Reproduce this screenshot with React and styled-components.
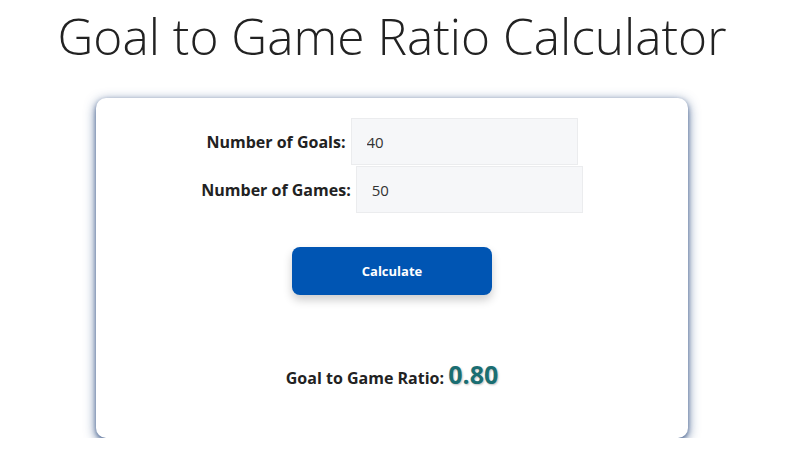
import React, { useState } from "react"
import styled, { createGlobalStyle } from "styled-components"

const GlobalStyle = createGlobalStyle`
    body {
        margin: 8px;
        background: #ffffff;
        font-family: "Open Sans", "Noto Sans", sans-serif;
        color: #212529;
    }
`

const App = () => {
    const [goals, setGoals] = useState("40")
    const [games, setGames] = useState("50")
    const [ratio, setRatio] = useState("0.80")

    const calculate = () => {
        const g = parseFloat(goals)
        const m = parseFloat(games)
        if (!m) return
        setRatio((g / m).toFixed(2))
    }

    return (
        <>
            <GlobalStyle />
            <Title>Goal to Game Ratio Calculator</Title>
            <Card>
                <FieldRow>
                    <Label htmlFor="goals">Number of Goals:</Label>
                    <Input id="goals" value={goals} onChange={e => setGoals(e.target.value)} />
                </FieldRow>
                <FieldRow>
                    <Label htmlFor="games">Number of Games:</Label>
                    <Input id="games" value={games} onChange={e => setGames(e.target.value)} />
                </FieldRow>
                <CalcButton onClick={calculate}>Calculate</CalcButton>
                <Result>
                    Goal to Game Ratio: <RatioValue>{ratio}</RatioValue>
                </Result>
            </Card>
        </>
    )
}

const Title = styled.h1`
            margin: 0 8px 0 0;
            padding-top: 1px;
            text-align: center;
            font-size: 49.6px;
            font-weight: 300;
            line-height: 54px;
            color: #222;`

const Card = styled.div`
            width: 592px;
            height: 340px;
            box-sizing: border-box;
            margin: 35px 0 0 88px;
            padding: 20px 0 0;
            background: #fff;
            border-radius: 10px;
            box-shadow: 0 2px 4px rgba(40, 70, 120, 0.55), 0 3px 12px rgba(40, 75, 130, 0.75);
            display: flex;
            flex-direction: column;
            align-items: center;`

const FieldRow = styled.div`
            display: flex;
            align-items: center;
            gap: 5px;
            margin-bottom: 1px;`

const Label = styled.label`
            font-size: 16px;
            font-weight: 700;
            color: #222;`

const Input = styled.input`
            width: 227px;
            height: 47px;
            box-sizing: border-box;
            padding: 0 15px;
            font-family: "Open Sans", "Noto Sans", sans-serif;
            font-size: 15px;
            color: #333;
            background: #f6f7f9;
            border: 1px solid #ebecee;
            outline: none;`

const CalcButton = styled.button`
            margin-top: 33px;
            width: 200px;
            height: 48px;
            border: none;
            border-radius: 8px;
            background: #0055b3;
            color: #fff;
            font-family: "Open Sans", "Noto Sans", sans-serif;
            font-size: 13px;
            font-weight: 700;
            cursor: pointer;
            box-shadow: 0 5px 10px rgba(0, 0, 0, 0.2);`

const Result = styled.div`
            margin-top: 62px;
            font-size: 16px;
            font-weight: 700;
            color: #222;`

const RatioValue = styled.span`
            font-size: 25px;
            color: #1a6e72;
            text-shadow: 1px 1px 2px rgba(0, 0, 0, 0.25);`

export default App
